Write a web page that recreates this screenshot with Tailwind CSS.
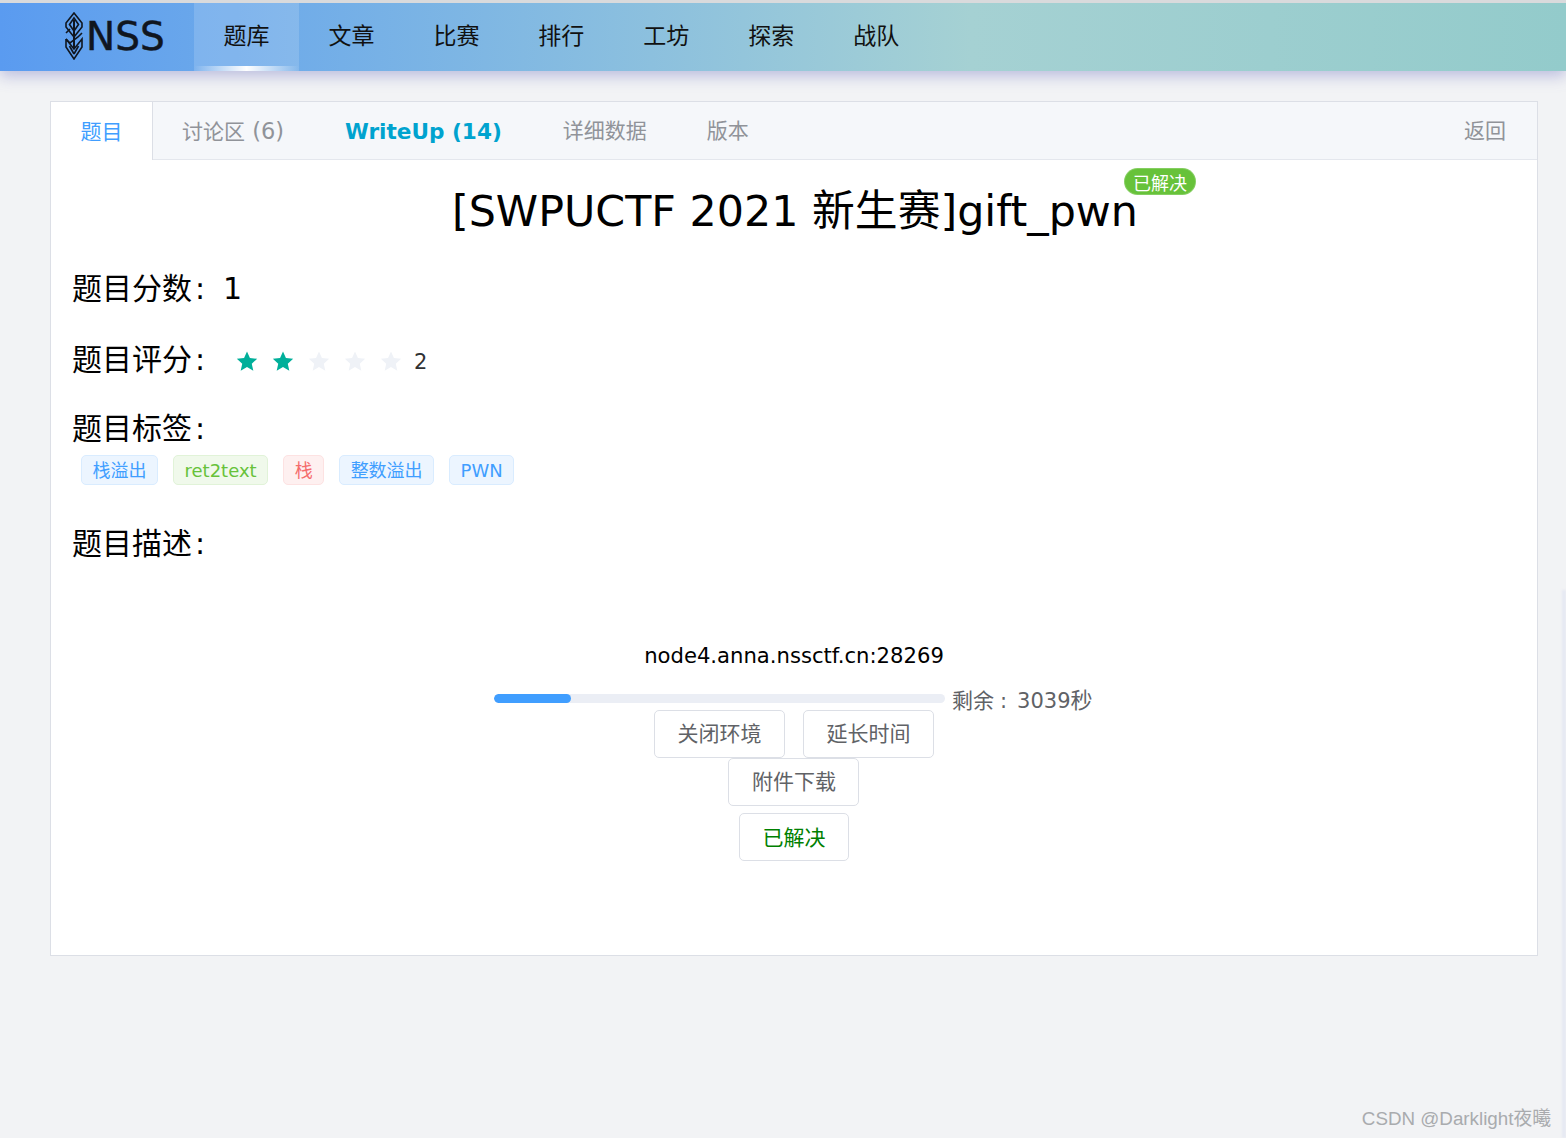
<!DOCTYPE html>
<html lang="zh">
<head>
    <meta charset="UTF-8">
    <title>NSSCTF</title>
    <script src="https://cdn.jsdelivr.net/npm/@tailwindcss/browser@4"></script>
</head>
<body class="bg-[#f2f3f5] h-[1138px] overflow-hidden relative font-['DejaVu_Sans','Noto_Sans_CJK_SC',sans-serif]">
    <div class="relative z-10 h-[3px] bg-[#d9dadc]"></div>
    <nav class="h-[68px] flex bg-linear-to-r from-[#5a9bf0] via-[#a5d1d3] via-62% to-[#93cbcb] shadow-[0_5px_14px_rgba(110,115,190,0.42)]">
        <div class="w-[194px] pl-[64px] flex items-center">
            <svg class="w-[20px] h-[48px] shrink-0 mb-[3px]" viewBox="0 0 20 48" fill="none" stroke="#10161f" stroke-width="1.6">
                <path d="M10 1 L2 11 L2 15 L10 25 L18 15 L18 11 Z"/>
                <path d="M10 6 L5.5 12.5 L10 19 L14.5 12.5 Z"/>
                <path d="M2 21 L6 17 M18 21 L14 25 L6 31 L2 27"/>
                <path d="M2 27 L2 35 L10 47 L18 35 L18 27 L10 37 L2 27"/>
                <path d="M10 42 L5.5 34 M10 42 L14.5 34"/>
                <path d="M10 8 L10 37" stroke-width="2"/>
            </svg>
            <span class="text-[39px] leading-none text-[#10161f] ml-[2px] mb-[2px] [-webkit-text-stroke:0.5px_#10161f]">NSS</span>
        </div>
        <a class="relative w-[105px] pb-[2px] flex items-center justify-center text-[23px] text-[#111] bg-white/15">题库
            <span class="absolute left-0 right-0 bottom-0 h-[5px] bg-linear-to-r from-white/0 via-white to-white/0"></span>
        </a>
        <a class="w-[105px] pb-[2px] flex items-center justify-center text-[23px] text-[#111]">文章</a>
        <a class="w-[104.8px] pb-[2px] flex items-center justify-center text-[23px] text-[#111]">比赛</a>
        <a class="w-[105px] pb-[2px] flex items-center justify-center text-[23px] text-[#111]">排行</a>
        <a class="w-[105px] pb-[2px] flex items-center justify-center text-[23px] text-[#111]">工坊</a>
        <a class="w-[105px] pb-[2px] flex items-center justify-center text-[23px] text-[#111]">探索</a>
        <a class="w-[105px] pb-[2px] flex items-center justify-center text-[23px] text-[#111]">战队</a>
    </nav>

    <main class="relative ml-[50px] mt-[30px] w-[1488px] h-[855px] bg-white border border-[#dcdfe6]">
        <div class="h-[58px] flex items-center bg-[#f5f7fa] border-b border-[#e4e7ed] text-[21px] text-[#909399]">
            <div class="w-[102px] h-[58px] -mb-px pt-[4px] flex items-center justify-center bg-white border-r border-[#dcdfe6] text-[#409eff]">题目</div>
            <div class="ml-[29px] mt-[3px]">讨论区<span class="text-[22.5px]"> (6)</span></div>
            <div class="ml-[61px] mt-[3px] font-bold text-[#00a3cf] text-[21.6px]">WriteUp (14)</div>
            <div class="ml-[61px] mt-[3px]">详细数据</div>
            <div class="ml-[60px] mt-[3px]">版本</div>
            <div class="ml-auto mr-[31px] mt-[3px]">返回</div>
        </div>

        <div class="relative h-[102px] pt-[20px] pl-[2px] text-center text-[42.8px] leading-[62px] text-black">
            [SWPUCTF 2021 新生赛]gift_pwn
            <span class="absolute left-[1073px] top-[8px] h-[27px] w-[72px] rounded-full bg-[#67c23a] border border-white/20 text-white text-[18px] leading-[27px] pt-[1px]">已解决</span>
        </div>

        <div class="pl-[21px]">
            <div class="h-[54px] text-[30px] leading-[54px] text-black">题目分数<span class="ml-[3px]">:</span><span class="ml-[18px]">1</span></div>
            <div class="mt-[16px] h-[54px] flex items-center text-[30px] text-black">
                <span class="w-[164px]">题目评分<span class="ml-[3px]">:</span></span>
                <div class="flex gap-[14px] mt-[4px]">
                    <svg class="w-[22px] h-[22px]" viewBox="0 0 24 24" fill="#00af9a"><path d="M12 1.5l3.2 7.3 7.9.8-5.9 5.3 1.7 7.8L12 18.6l-6.9 4.1 1.7-7.8L.9 9.6l7.9-.8z"/></svg>
                    <svg class="w-[22px] h-[22px]" viewBox="0 0 24 24" fill="#00af9a"><path d="M12 1.5l3.2 7.3 7.9.8-5.9 5.3 1.7 7.8L12 18.6l-6.9 4.1 1.7-7.8L.9 9.6l7.9-.8z"/></svg>
                    <svg class="w-[22px] h-[22px]" viewBox="0 0 24 24" fill="#eff2f7"><path d="M12 1.5l3.2 7.3 7.9.8-5.9 5.3 1.7 7.8L12 18.6l-6.9 4.1 1.7-7.8L.9 9.6l7.9-.8z"/></svg>
                    <svg class="w-[22px] h-[22px]" viewBox="0 0 24 24" fill="#eff2f7"><path d="M12 1.5l3.2 7.3 7.9.8-5.9 5.3 1.7 7.8L12 18.6l-6.9 4.1 1.7-7.8L.9 9.6l7.9-.8z"/></svg>
                    <svg class="w-[22px] h-[22px]" viewBox="0 0 24 24" fill="#eff2f7"><path d="M12 1.5l3.2 7.3 7.9.8-5.9 5.3 1.7 7.8L12 18.6l-6.9 4.1 1.7-7.8L.9 9.6l7.9-.8z"/></svg>
                </div>
                <span class="ml-[12px] mt-[7px] text-[21px] text-[#303133]">2</span>
            </div>
            <div class="mt-[16px] h-[54px] text-[30px] leading-[54px] text-black">题目标签<span class="ml-[3px]">:</span></div>
            <div class="-mt-[1px] flex gap-[15px] pl-[9px] text-[18px] leading-[30px]">
                <span class="h-[30px] px-[10.5px] rounded-[5px] border border-[#d9ecff] bg-[#ecf5ff] text-[#409eff]">栈溢出</span>
                <span class="h-[30px] px-[10.5px] rounded-[5px] border border-[#e1f3d8] bg-[#f0f9eb] text-[#67c23a]">ret2text</span>
                <span class="h-[30px] px-[10.5px] rounded-[5px] border border-[#fde2e2] bg-[#fef0f0] text-[#f56c6c]">栈</span>
                <span class="h-[30px] px-[10.5px] rounded-[5px] border border-[#d9ecff] bg-[#ecf5ff] text-[#409eff]">整数溢出</span>
                <span class="h-[30px] w-[65px] text-center rounded-[5px] border border-[#d9ecff] bg-[#ecf5ff] text-[#409eff]">PWN</span>
            </div>
            <div class="mt-[32px] h-[54px] text-[30px] leading-[54px] text-black">题目描述<span class="ml-[3px]">:</span></div>
        </div>

        <div class="mt-[70px] flex flex-col items-center">
            <div class="h-[30px] text-[21.15px] leading-[30px] text-black">node4.anna.nssctf.cn:28269</div>
            <div class="mt-[14px] h-[32px] flex items-center w-[600px]">
                <div class="w-[451px] h-[9px] mb-[6px] rounded-full bg-[#ebeef5] overflow-hidden">
                    <div class="h-full rounded-full bg-[#409eff]" style="width:17%"></div>
                </div>
                <span class="ml-[7px] text-[21px] text-[#606266] whitespace-nowrap">剩余<span class="ml-[6px]">:</span><span class="ml-[10px]">3039</span><span class="text-[22px]">秒</span></span>
            </div>
            <div class="flex gap-[18px] -mt-[7px]">
                <button class="w-[131px] h-[48px] pt-[2px] rounded-[5px] border border-[#dcdfe6] bg-white text-[21px] text-[#606266]">关闭环境</button>
                <button class="w-[131px] h-[48px] pt-[2px] rounded-[5px] border border-[#dcdfe6] bg-white text-[21px] text-[#606266]">延长时间</button>
            </div>
            <button class="-ml-[2px] w-[131px] h-[48px] pt-[2px] pl-[2px] rounded-[5px] border border-[#dcdfe6] bg-white text-[21px] text-[#606266]">附件下载</button>
            <button class="mt-[7px] w-[110px] h-[48px] pt-[4px] rounded-[5px] border border-[#dcdfe6] bg-white text-[21px] text-[#008000]">已解决</button>
        </div>
    </main>

    <div class="absolute right-0 top-[590px] bottom-0 w-[4px] bg-[#e6e9f2] blur-[1px]"></div>
    <div class="absolute right-[15px] bottom-[6px] text-[18.8px] leading-[26px] text-[#a9abae] font-['Liberation_Sans','Noto_Sans_CJK_SC',sans-serif]">CSDN @Darklight夜曦</div>
</body>
</html>
